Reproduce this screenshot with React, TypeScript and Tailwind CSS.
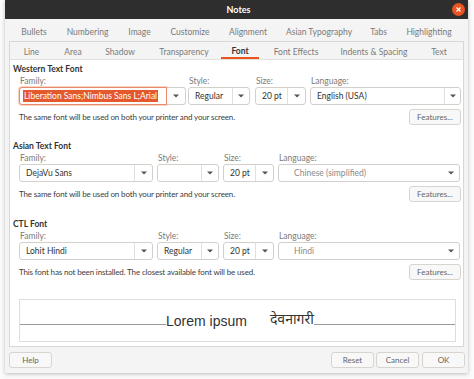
import React from "react";

const ui = "font-['Lato','Noto_Sans',sans-serif]";

const Arrow = () => (
  <svg width="6" height="4" viewBox="0 0 6 4" className="block">
    <path d="M0 0.5 L6 0.5 L3 3.5 Z" fill="#555" />
  </svg>
);

type ComboProps = {
  w: string;
  btn: string;
  text: string;
  disabled?: boolean;
  sep?: boolean;
};

const Combo = ({ w, btn, text, disabled, sep = true }: ComboProps) => (
  <div
    className={`${w} flex h-[18px] rounded-[3px] border border-[#d3cfcb] bg-white`}
  >
    <div
      className={`flex flex-1 items-center truncate text-[8.5px] ${
        disabled ? "pl-[15px] text-[#8a8a8a]" : "pl-[6px] text-[#333]"
      }`}
    >
      {text}
    </div>
    <div
      className={`${btn} flex items-center justify-center ${
        sep ? "border-l border-[#e2dfdc]" : ""
      }`}
    >
      <Arrow />
    </div>
  </div>
);

const Field = ({ label, children }: { label: string; children: React.ReactNode }) => (
  <div className="flex flex-col">
    <div className="flex h-[12px] items-center pl-[1px] text-[8.5px] text-[#7b7b7b]">
      {label}
    </div>
    {children}
  </div>
);

const Btn = ({ label, w }: { label: string; w: string }) => (
  <div
    className={`${w} flex h-[16px] items-center justify-center rounded-[3px] border border-[#d8d4d0] bg-[#f8f8f8] text-[8px] text-[#666]`}
  >
    {label}
  </div>
);

const NoteRow = ({ note }: { note: string }) => (
  <div className="flex h-[20px] items-center justify-between pt-[4px] pl-[9px] pr-[2px]">
    <span className="text-[8px] tracking-[-0.15px] text-[#3c3c3c]">{note}</span>
    <Btn label="Features..." w="w-[52px]" />
  </div>
);

const Header = ({ title }: { title: string }) => (
  <div className="flex h-[12px] items-center pl-[3px] text-[8.5px] font-bold text-[#333]">
    {title}
  </div>
);

export default function App() {
  const tabs1 = [
    ["Bullets", "w-[52px]"],
    ["Numbering", "w-[55px]"],
    ["Image", "w-[49px]"],
    ["Customize", "w-[52px]"],
    ["Alignment", "w-[64px]"],
    ["Asian Typography", "w-[78px]"],
    ["Tabs", "w-[41px]"],
    ["Highlighting", "w-[60px]"],
  ];
  const tabs2 = [
    ["Line", "w-[43px]"],
    ["Area", "w-[40px]"],
    ["Shadow", "w-[54px]"],
    ["Transparency", "w-[74px]"],
    ["Font", "w-[38px]"],
    ["Font Effects", "w-[74px]"],
    ["Indents & Spacing", "w-[82px]"],
    ["Text", "flex-1"],
  ];

  return (
    <div className={`${ui} h-[379px] w-[474px] bg-[#fbfbfb] pl-[5px]`}>
      <div className="flex h-[373px] w-[463px] flex-col bg-[#f4f4f4] shadow-[0_1px_4px_rgba(0,0,0,0.25)]">
        {/* Title bar */}
        <div className="flex h-[19px] items-center justify-between bg-[#2e2e2e] pl-[20px] pr-[3px]">
          <span className="flex-1 text-center text-[9px] font-bold text-white">Notes</span>
          <div className="flex h-[13px] w-[13px] items-center justify-center rounded-full bg-[#e95420]">
            <svg width="5" height="5" viewBox="0 0 5 5">
              <path d="M0.5 0.5 L4.5 4.5 M4.5 0.5 L0.5 4.5" stroke="#fff" strokeWidth="1.1" />
            </svg>
          </div>
        </div>

        {/* Outer tabs */}
        <div className="flex h-[22px] items-center pl-[3px] pt-[4px]">
          {tabs1.map(([t, w]) => (
            <div key={t} className={`${w} text-center text-[8.5px] text-[#7a7a7a]`}>
              {t}
            </div>
          ))}
        </div>

        {/* Frame */}
        <div className="ml-[4px] flex h-[306px] w-[455px] flex-col border border-[#d9d6d3] bg-white">
          <div className="flex h-[18px] border-b border-[#e3e0dd] bg-[#f4f4f4]">
            {tabs2.map(([t, w]) => (
              <div
                key={t}
                className={`${w} flex items-center justify-center pt-[3px] text-[8.5px] ${
                  t === "Font"
                    ? "border-b-2 border-[#e95420] font-bold text-[#333]"
                    : "text-[#7a7a7a]"
                }`}
              >
                {t}
              </div>
            ))}
          </div>

          {/* Western */}
          <div className="pt-[3px]">
            <Header title="Western Text Font" />
            <div className="flex pl-[9px]">
              <Field label="Family:">
                <div className="flex">
                  <div className="flex h-[18px] w-[148px] items-center rounded-l-[3px] border border-[#e9896a] bg-white pl-[3px] shadow-[0_0_0_1px_rgba(233,84,32,0.25)]">
                    <span className="bg-[#e4592c] px-[1px] text-[8.5px] leading-[12px] text-white">
                      Liberation Sans;Nimbus Sans L;Arial
                    </span>
                  </div>
                  <div className="flex h-[18px] w-[19px] items-center justify-center rounded-r-[3px] border border-l-0 border-[#d3cfcb] bg-white">
                    <Arrow />
                  </div>
                </div>
              </Field>
              <div className="ml-[2px]">
                <Field label="Style:">
                  <Combo w="w-[62px]" btn="w-[17px]" text="Regular" />
                </Field>
              </div>
              <div className="ml-[5px]">
                <Field label="Size:">
                  <Combo w="w-[51px]" btn="w-[18px]" text="20 pt" />
                </Field>
              </div>
              <div className="ml-[4px]">
                <Field label="Language:">
                  <Combo w="w-[151px]" btn="w-[16px]" text="English (USA)" />
                </Field>
              </div>
            </div>
            <NoteRow note="The same font will be used on both your printer and your screen." />
          </div>

          {/* Asian */}
          <div className="mt-[15px]">
            <Header title="Asian Text Font" />
            <div className="flex gap-[4px] pl-[9px]">
              <Field label="Family:">
                <Combo w="w-[134px]" btn="w-[18px]" text="DejaVu Sans" />
              </Field>
              <Field label="Style:">
                <Combo w="w-[62px]" btn="w-[17px]" text="" />
              </Field>
              <Field label="Size:">
                <Combo w="w-[51px]" btn="w-[18px]" text="20 pt" />
              </Field>
              <Field label="Language:">
                <Combo w="w-[182px]" btn="w-[16px]" text="Chinese (simplified)" disabled sep={false} />
              </Field>
            </div>
            <NoteRow note="The same font will be used on both your printer and your screen." />
          </div>

          {/* CTL */}
          <div className="mt-[16px]">
            <Header title="CTL Font" />
            <div className="flex gap-[4px] pl-[9px]">
              <Field label="Family:">
                <Combo w="w-[134px]" btn="w-[18px]" text="Lohit Hindi" />
              </Field>
              <Field label="Style:">
                <Combo w="w-[62px]" btn="w-[17px]" text="Regular" />
              </Field>
              <Field label="Size:">
                <Combo w="w-[51px]" btn="w-[18px]" text="20 pt" />
              </Field>
              <Field label="Language:">
                <Combo w="w-[182px]" btn="w-[16px]" text="Hindi" disabled sep={false} />
              </Field>
            </div>
            <NoteRow note="This font has not been installed. The closest available font will be used." />
          </div>

          {/* Preview */}
          <div className="ml-[9px] mt-[19px] flex h-[43px] w-[437px] items-end border border-[#e0dedc] bg-white pb-[16px]">
            <div className="h-px w-[146px] bg-[#9a9a9a]" />
            <span className="mb-[-3px] font-['Liberation_Sans',Arial,sans-serif] text-[14px] leading-none text-[#333]">
              Lorem ipsum
            </span>
            <span className="mb-[-3px] ml-[23px] font-['Noto_Sans_Devanagari','Lohit_Devanagari','Noto_Sans',sans-serif] text-[14px] leading-none text-[#333]">
              देवनागरी
            </span>
            <div className="h-px flex-1 bg-[#9a9a9a]" />
          </div>
        </div>

        {/* Buttons */}
        <div className="flex flex-1 items-center justify-between pl-[4px] pr-[3px]">
          <Btn label="Help" w="w-[43px]" />
          <div className="flex gap-[2px]">
            <Btn label="Reset" w="w-[43px]" />
            <Btn label="Cancel" w="w-[43px]" />
            <div className="ml-[1px]">
              <Btn label="OK" w="w-[43px]" />
            </div>
          </div>
        </div>
      </div>
    </div>
  );
}
